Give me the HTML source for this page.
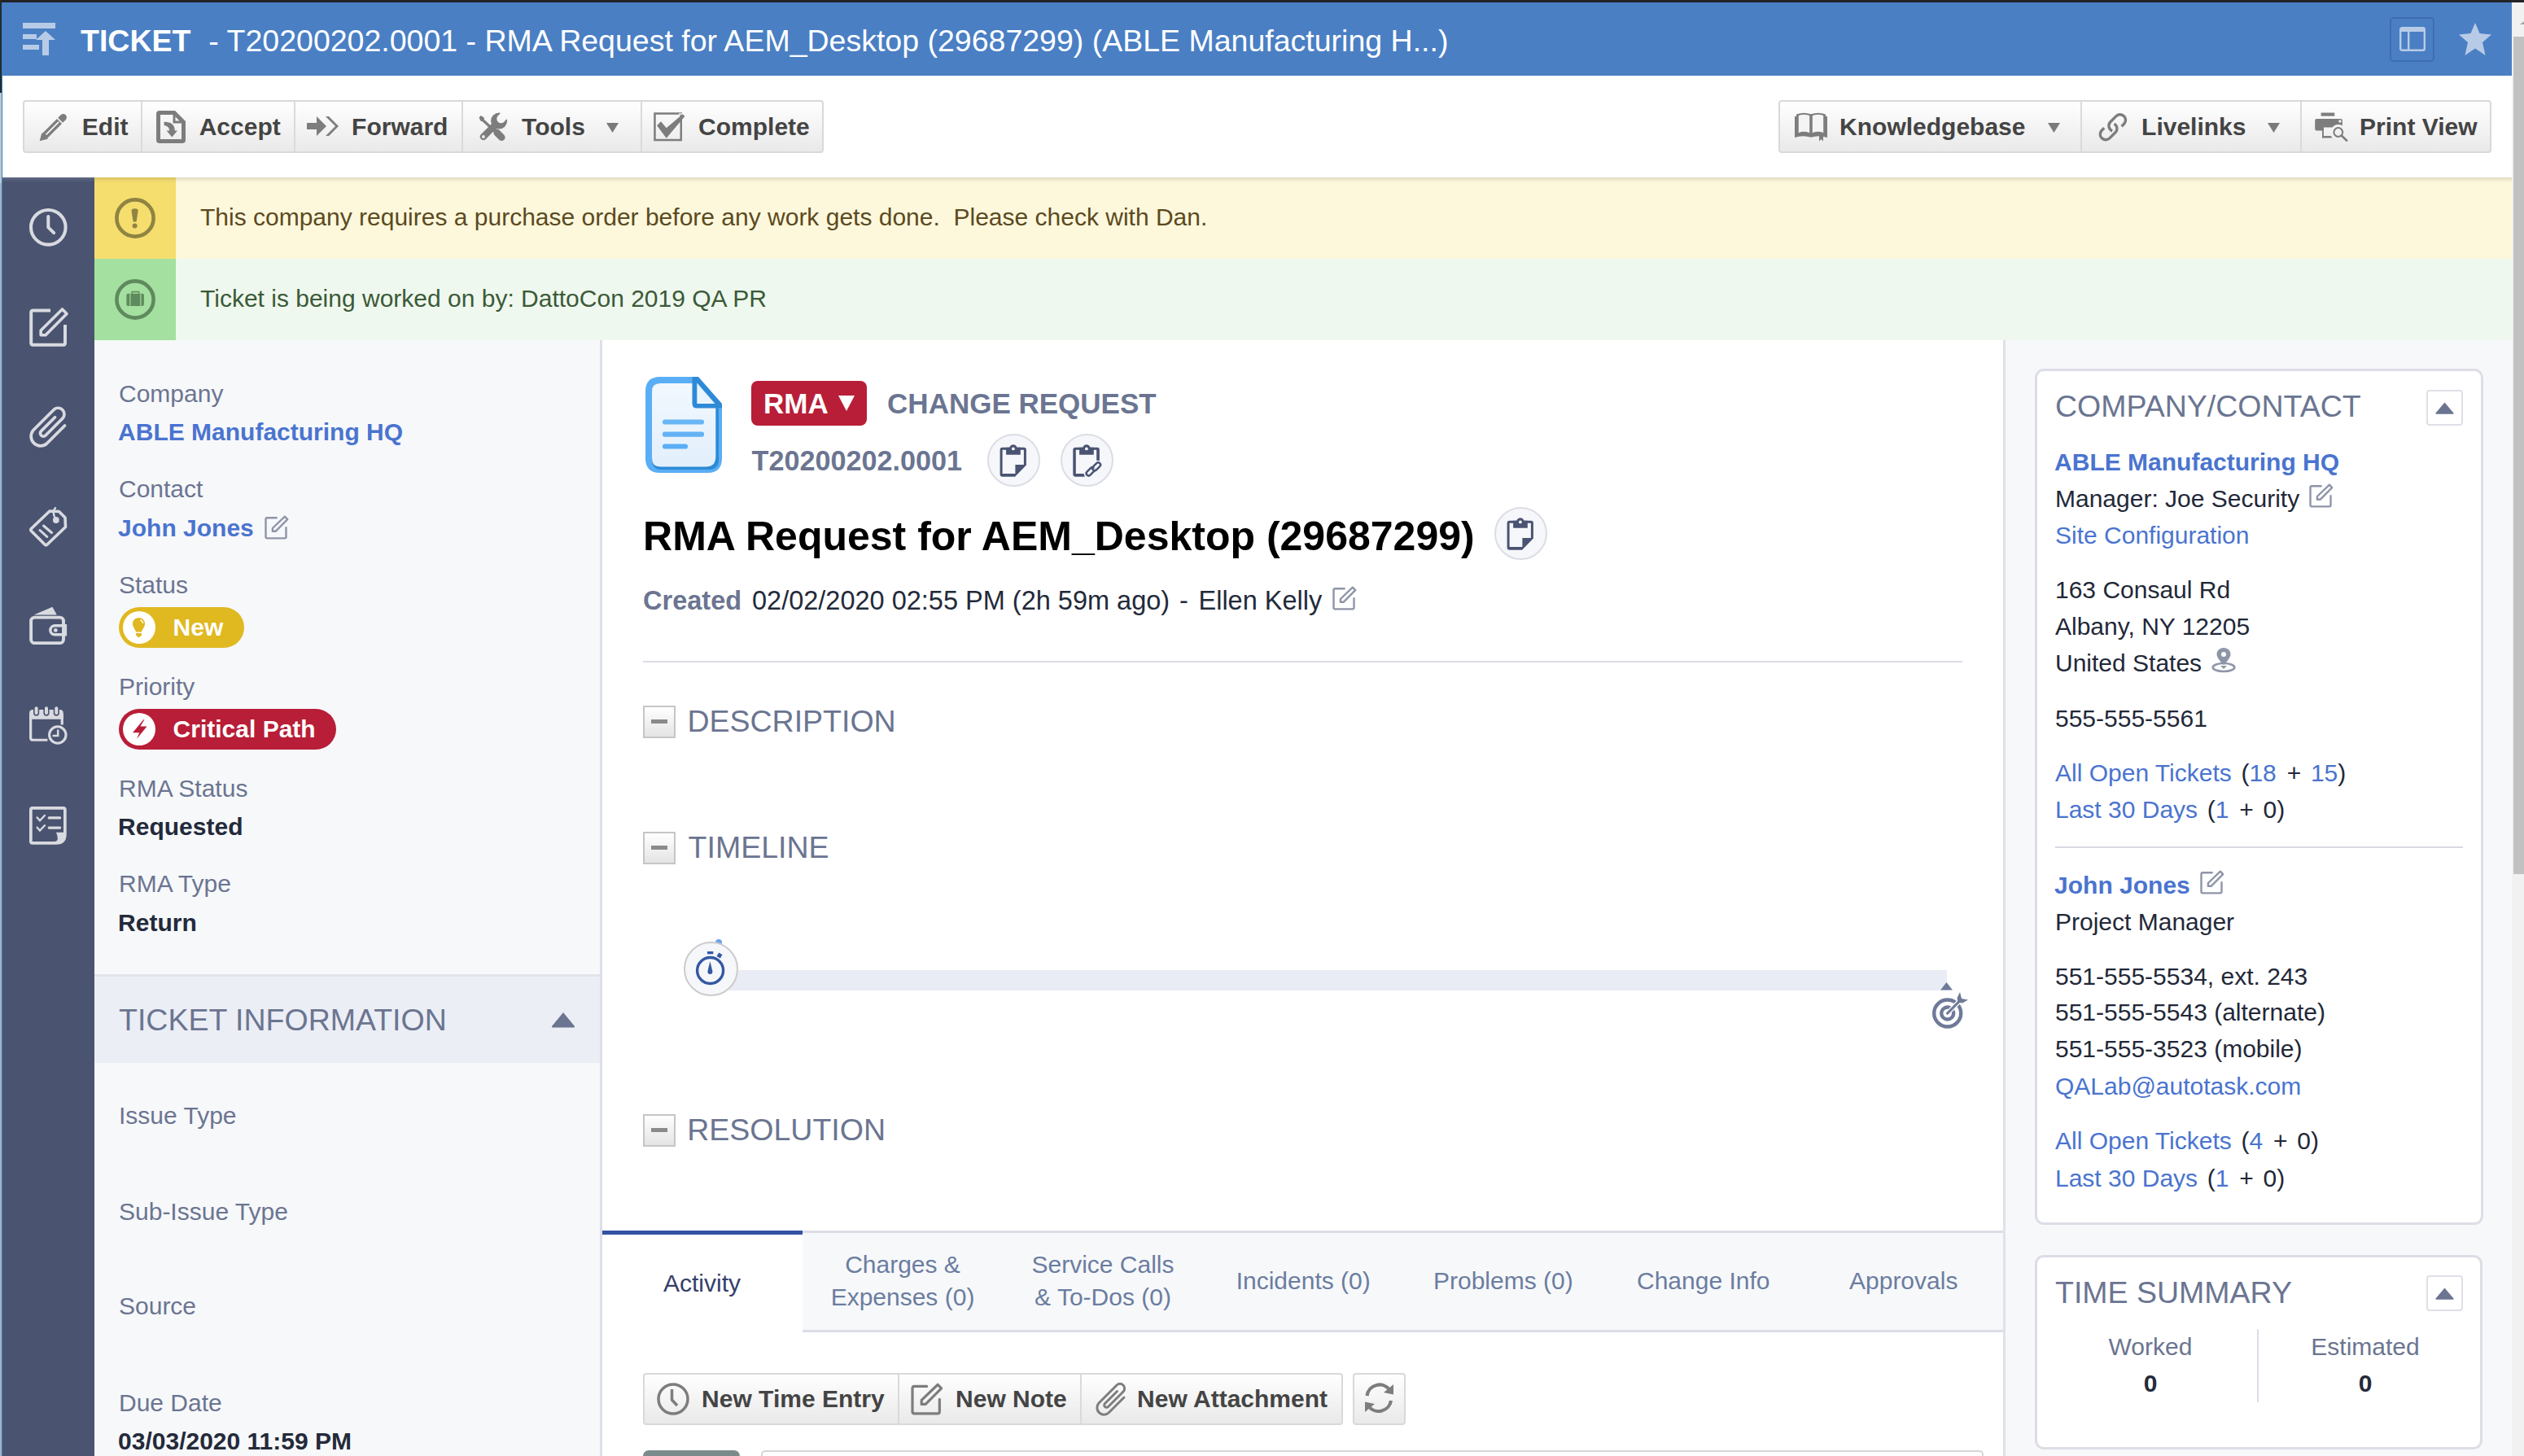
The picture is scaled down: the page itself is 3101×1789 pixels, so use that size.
<!DOCTYPE html>
<html><head><meta charset="utf-8"><style>
html,body{margin:0;padding:0;width:3101px;height:1789px;overflow:hidden;background:#fff;font-family:"Liberation Sans", sans-serif;}
</style></head><body>
<div style="position:absolute;left:0px;top:0px;width:3101px;height:3px;background:#222327"></div><div style="position:absolute;left:0px;top:0px;width:2px;height:1789px;background:#2a2a2a"></div><div style="position:absolute;left:0px;top:114px;width:2px;height:111px;background:#c6c6c6"></div><div style="position:absolute;left:0px;top:225px;width:2px;height:1564px;background:#aeb0b2"></div><div style="position:absolute;left:2px;top:3px;width:1px;height:1786px;background:#1f86de"></div><div style="position:absolute;left:3px;top:3px;width:3083px;height:90px;background:#4a7fc4"></div><svg style="position:absolute;left:28px;top:28px;overflow:visible" width="40" height="40" viewBox="0 0 40 40"><g fill="#b8cbe6"><rect x="0" y="0" width="40" height="7"/><rect x="0" y="14" width="17" height="6"/><rect x="0" y="27" width="20" height="6"/><polygon points="28,10 40,21 32,21 32,40 24,40 24,21 16,21"/></g></svg><div style="position:absolute;left:99.0px;top:32.26px;font-size:37.5px;line-height:37.5px;font-weight:700;color:#fff;white-space:pre;">TICKET</div><div style="position:absolute;left:235.5px;top:32.26px;font-size:37.5px;line-height:37.5px;font-weight:400;color:#fff;white-space:pre;">  - T20200202.0001 - RMA Request for AEM_Desktop (29687299) (ABLE Manufacturing H...)</div><div style="position:absolute;left:2936px;top:21px;width:55px;height:55px;box-sizing:border-box;border:2px solid #3e6db0;border-radius:5px"></div><svg style="position:absolute;left:2948px;top:33px;overflow:visible" width="32" height="30" viewBox="0 0 32 30"><rect x="1.2" y="1.2" width="29.6" height="27.6" rx="2" fill="none" stroke="#b8cbe6" stroke-width="2.4"/><rect x="1" y="1" width="30" height="5" fill="#b8cbe6"/><rect x="10" y="2" width="2.4" height="26" fill="#b8cbe6"/></svg><svg style="position:absolute;left:3021px;top:28px;overflow:visible" width="40" height="40" viewBox="0 0 40 40"><polygon fill="#b8cbe6" points="20,0 25.5,13 40,14.5 29,24 32.5,40 20,31.5 7.5,40 11,24 0,14.5 14.5,13"/></svg><div style="position:absolute;left:3086px;top:3px;width:15px;height:1786px;background:#f1f1f1"></div><div style="position:absolute;left:3088px;top:45px;width:13px;height:1029px;background:#c1c1c1"></div><svg style="position:absolute;left:3096px;top:24px;overflow:visible" width="8" height="6" viewBox="0 0 8 6"><polygon points="0,6 8,0 8,6" fill="#a3a3a3"/></svg><div style="position:absolute;left:3px;top:93px;width:3083px;height:125px;background:#fff"></div><div style="position:absolute;left:28px;top:123px;width:984px;height:65px;box-sizing:border-box;border:2px solid #d9d9d9;border-radius:4px;background:linear-gradient(#ffffff,#e9e9e9)"></div><div style="position:absolute;left:173px;top:125px;width:2px;height:61px;background:#dadada"></div><div style="position:absolute;left:361px;top:125px;width:2px;height:61px;background:#dadada"></div><div style="position:absolute;left:567px;top:125px;width:2px;height:61px;background:#dadada"></div><div style="position:absolute;left:787px;top:125px;width:2px;height:61px;background:#dadada"></div><div style="position:absolute;left:2185px;top:123px;width:876px;height:65px;box-sizing:border-box;border:2px solid #d9d9d9;border-radius:4px;background:linear-gradient(#ffffff,#e9e9e9)"></div><div style="position:absolute;left:2556px;top:125px;width:2px;height:61px;background:#dadada"></div><div style="position:absolute;left:2826px;top:125px;width:2px;height:61px;background:#dadada"></div><div style="position:absolute;left:100.8px;top:140.60px;font-size:30px;line-height:30px;font-weight:700;color:#444;white-space:pre;">Edit</div><div style="position:absolute;left:244.7px;top:140.60px;font-size:30px;line-height:30px;font-weight:700;color:#444;white-space:pre;">Accept</div><div style="position:absolute;left:432.1px;top:140.60px;font-size:30px;line-height:30px;font-weight:700;color:#444;white-space:pre;">Forward</div><div style="position:absolute;left:641.1px;top:140.60px;font-size:30px;line-height:30px;font-weight:700;color:#444;white-space:pre;">Tools</div><div style="position:absolute;left:858.1px;top:140.60px;font-size:30px;line-height:30px;font-weight:700;color:#444;white-space:pre;">Complete</div><div style="position:absolute;left:2260.1px;top:140.60px;font-size:30px;line-height:30px;font-weight:700;color:#444;white-space:pre;">Knowledgebase</div><div style="position:absolute;left:2631.1px;top:140.60px;font-size:30px;line-height:30px;font-weight:700;color:#444;white-space:pre;">Livelinks</div><div style="position:absolute;left:2899.1px;top:140.60px;font-size:30px;line-height:30px;font-weight:700;color:#444;white-space:pre;">Print View</div><svg style="position:absolute;left:745px;top:151px;overflow:visible" width="15" height="12" viewBox="0 0 15 12"><polygon points="0,0 15,0 7.5,12" fill="#7a7a7a"/></svg><svg style="position:absolute;left:2515.5px;top:151px;overflow:visible" width="15" height="12" viewBox="0 0 15 12"><polygon points="0,0 15,0 7.5,12" fill="#7a7a7a"/></svg><svg style="position:absolute;left:2786px;top:151px;overflow:visible" width="15" height="12" viewBox="0 0 15 12"><polygon points="0,0 15,0 7.5,12" fill="#7a7a7a"/></svg><svg style="position:absolute;left:48px;top:138px;overflow:visible" width="36" height="37" viewBox="0 0 36 37"><g fill="#7d7d7d"><path d="M0.7 35.2 L3.2 25.7 L4.5 25.4 L22 7.9 L28 13.9 L10.5 31.4 L10.6 32.8 Z"/><path d="M23.13 6.77 L26.67 3.23 A4.24 4.24 0 0 1 32.67 9.23 L29.13 12.77 Z"/></g><path d="M8.6 27.3 L24.1 11.8" stroke="#f4f4f4" stroke-width="1.8"/></svg><svg style="position:absolute;left:192px;top:136px;overflow:visible" width="36" height="40" viewBox="0 0 36 40"><g fill="none" stroke="#7d7d7d" stroke-width="5"><path d="M2.5 4 Q2.5 2.5 4 2.5 L22 2.5 L33.5 14 L33.5 36 Q33.5 37.5 32 37.5 L4 37.5 Q2.5 37.5 2.5 36 Z"/></g><path d="M22 2.5 L22 14 L33.5 14" fill="none" stroke="#7d7d7d" stroke-width="3"/><path d="M9.6 13.8 Q22.5 13.5 22.8 24.5 L26 24.5 L19.3 32.5 L12.6 24.5 L16.2 24.5 Q15.8 18.8 9.6 17.9 Z" fill="#7d7d7d"/></svg><svg style="position:absolute;left:377px;top:142px;overflow:visible" width="40" height="26" viewBox="0 0 40 26"><g fill="#7d7d7d"><path d="M0 9 L12 9 L12 1 L24 13 L12 25 L12 17 L0 17 Z"/><path d="M23 1 L27 1 L39 13 L27 25 L23 25 L35 13 Z"/></g></svg><svg style="position:absolute;left:588px;top:138px;overflow:visible" width="38" height="38" viewBox="0 0 38 38"><defs><mask id="wm"><rect x="-5" y="-5" width="50" height="50" fill="#fff"/><circle cx="27.6" cy="7.9" r="5.3" fill="#000"/><path d="M24.3 4.2 L31.3 11.2 L42 2 L33 -7 Z" fill="#000"/></mask></defs><g fill="#7d7d7d"><circle cx="25.1" cy="10.6" r="10" mask="url(#wm)"/><path d="M0.6 6.5 L2.6 3.9 L6.5 6.2 L6.9 8.5 L3.9 11.2 L2.2 10.2 Z"/><path d="M16 21.8 L18.8 19 L25.5 22 L21 27 Z"/></g><path d="M5.9 30 L19.5 16.4" stroke="#7d7d7d" stroke-width="8.2" stroke-linecap="round"/><path d="M4.6 9 L17.5 21" stroke="#7d7d7d" stroke-width="3.2"/><path d="M22.8 25.3 L28.3 30.8" stroke="#7d7d7d" stroke-width="8.6" stroke-linecap="round"/><circle cx="5.9" cy="30" r="1.9" fill="#efefef"/></svg><svg style="position:absolute;left:803px;top:137px;overflow:visible" width="40" height="38" viewBox="0 0 40 38"><rect x="1.45" y="2.5" width="32.3" height="32.55" fill="none" stroke="#7d7d7d" stroke-width="2.5"/><path d="M31 3 L37 3.3 L33 8" fill="none" stroke="#f6f6f6" stroke-width="1.6"/><path d="M4.1 17.2 L9 12.3 L15.7 20.3 L35.8 3.3 L38.3 5.9 L15.7 32.7 Z" fill="#7d7d7d"/></svg><svg style="position:absolute;left:2205px;top:137px;overflow:visible" width="40" height="38" viewBox="0 0 40 38"><g fill="#7d7d7d"><path d="M0 6 L2 6 L2 3.5 Q11 0 20 3.3 Q29 0 38 3.5 L38 6 L40 6 L40 32 Q30 28.5 20 31.8 Q10 28.5 0 32 Z"/><path d="M30 29 L35 29 L35 36.6 L32.5 33.9 L30 36.6 Z"/></g><path d="M4.8 4.9 Q11 2.8 18.2 5 L18.2 26.2 Q11 23.5 4.8 26.2 Z M21.8 5 Q29 2.8 35.2 4.9 L35.2 26.2 Q29 23.5 21.8 26.2 Z" fill="#f4f4f4"/></svg><svg style="position:absolute;left:2578px;top:137px;overflow:visible" width="38" height="38" viewBox="0 0 38 38"><g fill="none" stroke="#7d7d7d" stroke-width="3.4"><path d="M28.6 18.2 L31.8 15 A6.8 6.8 0 0 0 22.2 5.4 L14.9 12.7 A6.8 6.8 0 0 0 17.2 23.8"/><path d="M19.5 15.1 A6.8 6.8 0 0 1 20.9 25.8 L13.6 33.1 A6.8 6.8 0 0 1 4 23.5 L7.2 20.3"/></g></svg><svg style="position:absolute;left:2844px;top:138px;overflow:visible" width="42" height="37" viewBox="0 0 42 37"><g fill="#7d7d7d"><rect x="7.6" y="0.5" width="16.6" height="4.1"/><path d="M2.2 7.9 L31.9 7.9 Q33.9 7.9 33.9 9.9 L33.9 16.5 A9.5 9.5 0 0 0 21.7 18.2 L21.7 18.5 L10.8 18.5 L10.8 22.6 L2.2 22.6 Q0.2 22.6 0.2 20.6 L0.2 9.9 Q0.2 7.9 2.2 7.9 Z"/><rect x="9" y="18.5" width="1.9" height="13"/><path d="M9 29.1 L20 29.1 L21.2 31.5 L9 31.5 Z"/></g><circle cx="30.9" cy="11" r="1.7" fill="#f4f4f4"/><circle cx="28.8" cy="24.5" r="5.4" fill="none" stroke="#7d7d7d" stroke-width="2"/><path d="M33 28.8 L39.2 34.7" stroke="#7d7d7d" stroke-width="2.6" stroke-linecap="round"/></svg><div style="position:absolute;left:3px;top:218px;width:113px;height:1571px;background:#4a5470"></div><div style="position:absolute;left:3px;top:218px;width:113px;height:6px;background:linear-gradient(#5f6883,#4a5470)"></div><svg style="position:absolute;left:36px;top:256px;overflow:visible" width="46" height="48" viewBox="0 0 46 48"><circle cx="23.3" cy="23.3" r="21.3" fill="none" stroke="#d9dae0" stroke-width="4.1"/><path d="M23.3 10 L23.3 23.3 L30.2 30.2" fill="none" stroke="#d9dae0" stroke-width="4" stroke-linecap="round" stroke-linejoin="round"/></svg><svg style="position:absolute;left:36px;top:378.5px;overflow:visible" width="46" height="48" viewBox="0 0 46 48"><path d="M26 2.5 L4.5 2.5 Q2.2 2.5 2.2 4.8 L2.2 42.2 Q2.2 44.8 4.8 44.8 L41.5 44.8 Q44 44.8 44 42.2 L44 20" fill="none" stroke="#d9dae0" stroke-width="4"/><path d="M14.2 27 L40.5 1 L46 6.5 L20 32.8 L14.2 32.8 Z" fill="none" stroke="#d9dae0" stroke-width="3.6" stroke-linejoin="round"/></svg><svg style="position:absolute;left:36px;top:501px;overflow:visible" width="46" height="48" viewBox="0 0 46 48"><path d="M43.5 22 L21.5 44 A11.7 11.7 0 0 1 5 27.5 L30.5 2 A7.6 7.6 0 0 1 41.2 12.7 L20 34 A3.8 3.8 0 0 1 14.6 28.6 L31.5 11.7" fill="none" stroke="#d9dae0" stroke-width="3.7" stroke-linecap="round"/></svg><svg style="position:absolute;left:36px;top:623px;overflow:visible" width="46" height="48" viewBox="0 0 46 48"><path d="M19 46 L2.5 29.5 Q1 28 2.5 26.5 L25 5 L36.5 5.5 L44 13 L44.5 24.5 L22 46 Q20.5 47.5 19 46 Z" fill="none" stroke="#d9dae0" stroke-width="3.6" stroke-linejoin="round"/><circle cx="32.8" cy="16" r="3.9" fill="#d9dae0"/><path d="M32 1.2 Q27 6 32.8 16" fill="none" stroke="#d9dae0" stroke-width="2.4" stroke-linecap="round"/><path d="M13 28.5 L21.8 36.5 M17.5 23 L27.5 31.5" stroke="#d9dae0" stroke-width="3" stroke-linecap="round"/></svg><svg style="position:absolute;left:36px;top:746px;overflow:visible" width="46" height="48" viewBox="0 0 46 48"><rect x="2.1" y="12.65" width="39.9" height="31.5" rx="4.5" fill="none" stroke="#d9dae0" stroke-width="3.9"/><path d="M5.5 9.4 L28.4 -0.2 L33.8 9.4 Z" fill="#d9dae0"/><path d="M44.35 22.75 L31.4 22.75 A5.55 5.55 0 0 0 31.4 33.85 L44.35 33.85 Z" fill="none" stroke="#d9dae0" stroke-width="3.5"/><circle cx="32.3" cy="28.4" r="2.4" fill="#d9dae0"/></svg><svg style="position:absolute;left:36px;top:868px;overflow:visible" width="46" height="48" viewBox="0 0 46 48"><path d="M22.4 41.25 L4.5 41.25 Q1.65 41.25 1.65 38.4 L1.65 9 M40.25 9 L40.25 22.4" fill="none" stroke="#d9dae0" stroke-width="3.2"/><path d="M0.05 15.8 L0.05 8.5 Q0.05 4.1 4.4 4.1 L37.4 4.1 Q41.8 4.1 41.8 8.5 L41.8 15.8 Z" fill="#d9dae0"/><g fill="#d9dae0" stroke="#4a5470" stroke-width="1.6"><rect x="5.8" y="-0.6" width="5.6" height="11.5" rx="2.8"/><rect x="18.2" y="-0.6" width="5.6" height="11.5" rx="2.8"/><rect x="30.5" y="-0.6" width="5.6" height="11.5" rx="2.8"/></g><circle cx="34.8" cy="35" r="11" fill="#4a5470"/><circle cx="34.8" cy="35" r="10.2" fill="none" stroke="#d9dae0" stroke-width="3.1"/><path d="M35.2 28.6 L35.2 36 L28.6 36" fill="none" stroke="#d9dae0" stroke-width="2.5"/></svg><svg style="position:absolute;left:36px;top:991px;overflow:visible" width="46" height="48" viewBox="0 0 46 48"><path d="M4 0 L41.7 0 Q45.7 0 45.7 4 L45.7 34 Q45.7 46.7 33 46.7 L4 46.7 Q0 46.7 0 42.7 L0 4 Q0 0 4 0 Z M3.7 3.7 L42 3.7 L42 31.7 L33 31.7 Q35.5 38 34.5 41 Q33.5 43 31.5 43 L3.7 43 Z" fill="#d9dae0" fill-rule="evenodd"/><path d="M9 12.7 L13 17.3 L19.6 10.2 M9 25 L13 29.6 L19.6 22.5" fill="none" stroke="#d9dae0" stroke-width="2.3"/><path d="M24.3 13.9 L37.6 13.9 M24.3 26.1 L37.6 26.1" stroke="#d9dae0" stroke-width="3.4" stroke-linecap="round"/></svg><div style="position:absolute;left:116px;top:218px;width:100px;height:100px;background:#f5de6e"></div><div style="position:absolute;left:216px;top:218px;width:2870px;height:100px;background:#fdf8dc"></div><div style="position:absolute;left:116px;top:318px;width:100px;height:100px;background:#a4e0a0"></div><div style="position:absolute;left:216px;top:318px;width:2870px;height:100px;background:#eff8ee"></div><div style="position:absolute;left:116px;top:218px;width:2970px;height:7px;background:linear-gradient(rgba(0,0,0,0.12),rgba(0,0,0,0.03) 60%,rgba(0,0,0,0))"></div><svg style="position:absolute;left:141px;top:243px;overflow:visible" width="50" height="50" viewBox="0 0 50 50"><circle cx="25" cy="25" r="22.6" fill="none" stroke="#8f8442" stroke-width="4.6"/><path d="M20.5 15.8 Q20.5 13.3 24.6 13.3 Q28.7 13.3 28.7 15.8 L26.6 29.4 L22.6 29.4 Z" fill="#8f8442"/><circle cx="24.6" cy="34.6" r="3" fill="#8f8442"/></svg><svg style="position:absolute;left:141px;top:343px;overflow:visible" width="50" height="50" viewBox="0 0 50 50"><circle cx="25" cy="25" r="22.6" fill="none" stroke="#5f8a5d" stroke-width="4.6"/><rect x="14.4" y="17.7" width="21.5" height="15.2" rx="1.8" fill="#5f8a5d"/><path d="M21.2 17.7 L21.2 15.5 L29.6 15.5 L29.6 17.7" fill="none" stroke="#5f8a5d" stroke-width="1.5"/><rect x="18.3" y="17.7" width="1.1" height="15.2" fill="#a4e0a0"/><rect x="31.3" y="17.7" width="1.1" height="15.2" fill="#a4e0a0"/></svg><div style="position:absolute;left:246px;top:252.10px;font-size:30px;line-height:30px;font-weight:400;color:#5c4a1f;white-space:pre;">This company requires a purchase order before any work gets done.  Please check with Dan.</div><div style="position:absolute;left:246px;top:352.11px;font-size:30px;line-height:30px;font-weight:400;color:#3b5a39;white-space:pre;">Ticket is being worked on by: DattoCon 2019 QA PR</div><div style="position:absolute;left:116px;top:418px;width:621px;height:1371px;background:#f7f8fa"></div><div style="position:absolute;left:737px;top:418px;width:3px;height:1371px;background:#dedfe7"></div><div style="position:absolute;left:146px;top:468.61px;font-size:30px;line-height:30px;font-weight:400;color:#6b7591;white-space:pre;">Company</div><div style="position:absolute;left:145.1px;top:515.61px;font-size:30px;line-height:30px;font-weight:700;color:#4a74cf;white-space:pre;">ABLE Manufacturing HQ</div><div style="position:absolute;left:146px;top:585.61px;font-size:30px;line-height:30px;font-weight:400;color:#6b7591;white-space:pre;">Contact</div><div style="position:absolute;left:145.1px;top:633.61px;font-size:30px;line-height:30px;font-weight:700;color:#4a74cf;white-space:pre;">John Jones</div><div style="position:absolute;left:146px;top:703.61px;font-size:30px;line-height:30px;font-weight:400;color:#6b7591;white-space:pre;">Status</div><div style="position:absolute;left:146px;top:746px;width:154px;height:50px;background:#e0b820;border-radius:25px"></div><div style="position:absolute;left:151px;top:751px;width:40px;height:40px;border-radius:50%;background:#fff"></div><svg style="position:absolute;left:158px;top:757px;overflow:visible" width="26" height="30" viewBox="0 0 26 30"><path d="M12.5 2 C7.5 2 5 5.5 5 9.5 C5 13.5 8 15.5 9 19.5 L16 19.5 C17 15.5 20 13.5 20 9.5 C20 5.5 17.5 2 12.5 2 Z" fill="#e0b820"/><path d="M9 21 L16 21 L16 23.5 L12.5 26.5 L9 23.5 Z" fill="#e0b820"/><path d="M14.5 5 Q17.5 6 17.8 9" stroke="#fff" stroke-width="1.4" fill="none"/></svg><div style="position:absolute;left:212.6px;top:755.61px;font-size:30px;line-height:30px;font-weight:700;color:#fff;white-space:pre;">New</div><div style="position:absolute;left:146px;top:828.61px;font-size:30px;line-height:30px;font-weight:400;color:#6b7591;white-space:pre;">Priority</div><div style="position:absolute;left:146px;top:871px;width:267px;height:50px;background:#b81e37;border-radius:25px"></div><div style="position:absolute;left:151px;top:876px;width:40px;height:40px;border-radius:50%;background:#fff"></div><svg style="position:absolute;left:158px;top:883px;overflow:visible" width="26" height="26" viewBox="0 0 26 26"><path d="M18.5 1 L5 17.2 L13.3 17.2 L10 25 L22.5 9.6 L14.5 9.6 L19.5 1 Z" fill="#b81e37"/></svg><div style="position:absolute;left:212.6px;top:880.61px;font-size:30px;line-height:30px;font-weight:700;color:#fff;white-space:pre;">Critical Path</div><div style="position:absolute;left:146px;top:954.21px;font-size:30px;line-height:30px;font-weight:400;color:#6b7591;white-space:pre;">RMA Status</div><div style="position:absolute;left:145.1px;top:1000.61px;font-size:30px;line-height:30px;font-weight:700;color:#232a3a;white-space:pre;">Requested</div><div style="position:absolute;left:146px;top:1070.61px;font-size:30px;line-height:30px;font-weight:400;color:#6b7591;white-space:pre;">RMA Type</div><div style="position:absolute;left:145.1px;top:1118.61px;font-size:30px;line-height:30px;font-weight:700;color:#232a3a;white-space:pre;">Return</div><div style="position:absolute;left:116px;top:1197px;width:621px;height:3px;background:#e2e4ea"></div><div style="position:absolute;left:116px;top:1200px;width:621px;height:106px;background:#eceef5"></div><div style="position:absolute;left:146px;top:1234.86px;font-size:37.5px;line-height:37.5px;font-weight:400;color:#6b7591;white-space:pre;">TICKET INFORMATION</div><svg style="position:absolute;left:677px;top:1243px;overflow:visible" width="30" height="20" viewBox="0 0 30 20"><path d="M15 1 L29 18 Q29.5 19.5 28 19.5 L2 19.5 Q0.5 19.5 1 18 Z" fill="#6b7591"/></svg><div style="position:absolute;left:146px;top:1355.61px;font-size:30px;line-height:30px;font-weight:400;color:#6b7591;white-space:pre;">Issue Type</div><div style="position:absolute;left:146px;top:1474.01px;font-size:30px;line-height:30px;font-weight:400;color:#6b7591;white-space:pre;">Sub-Issue Type</div><div style="position:absolute;left:146px;top:1590.40px;font-size:30px;line-height:30px;font-weight:400;color:#6b7591;white-space:pre;">Source</div><div style="position:absolute;left:146px;top:1708.61px;font-size:30px;line-height:30px;font-weight:400;color:#6b7591;white-space:pre;">Due Date</div><div style="position:absolute;left:145.1px;top:1755.61px;font-size:30px;line-height:30px;font-weight:700;color:#232a3a;white-space:pre;">03/03/2020 11:59 PM</div><div style="position:absolute;left:740px;top:418px;width:1721px;height:1371px;background:#fff"></div><div style="position:absolute;left:2461px;top:418px;width:3px;height:1371px;background:#e0e1e9"></div><svg style="position:absolute;left:793px;top:463px;overflow:visible" width="94" height="118" viewBox="0 0 94 118"><defs><linearGradient id="dg" x1="0" y1="0" x2="0" y2="1"><stop offset="0" stop-color="#f2f8fe"/><stop offset="1" stop-color="#e2effc"/></linearGradient></defs><path d="M18 0 L60 0 L94 37 L94 100 Q94 118 76 118 L18 118 Q0 118 0 100 L0 18 Q0 0 18 0 Z" fill="#5aaef5"/><path d="M20 8 L60 8 L90 40 L90 102 Q90 114 78 114 L20 114 Q8 114 8 102 L8 20 Q8 8 20 8 Z" fill="#2e8ad6"/><path d="M18 8 L60 8 L86.3 38 L86.3 98 Q86.3 110.5 74 110.5 L18 110.5 Q8 110.5 8 100 L8 18 Q8 8 18 8 Z" fill="url(#dg)"/><path d="M57.5 0 L65 0 L94 33 L94 38.5 L63 38.5 Q57.5 38.5 57.5 33 Z" fill="#2e8ad6"/><path d="M63.3 7.5 L63.3 33 L85.5 33 Z" fill="#eaf4fd"/><g stroke-linecap="round" stroke-width="6.2"><path d="M24 55.5 L69 55.5" stroke="#69b6f5"/><path d="M24 70.7 L69 70.7" stroke="#63b2f5"/><path d="M24 85.5 L49 85.5" stroke="#5aaef5"/></g></svg><div style="position:absolute;left:923px;top:468px;width:142px;height:55px;background:#b81e37;border-radius:8px"></div><div style="position:absolute;left:938.1px;top:478.37px;font-size:35px;line-height:35px;font-weight:700;color:#fff;white-space:pre;">RMA</div><svg style="position:absolute;left:1030px;top:486px;overflow:visible" width="20" height="19" viewBox="0 0 20 19"><polygon points="0,0 20,0 10,19" fill="#fff"/></svg><div style="position:absolute;left:1090.1px;top:478.37px;font-size:35px;line-height:35px;font-weight:700;color:#6b7591;white-space:pre;">CHANGE REQUEST</div><div style="position:absolute;left:923.5px;top:549.05px;font-size:34.2px;line-height:34.2px;font-weight:700;color:#6b7591;white-space:pre;">T20200202.0001</div><div style="position:absolute;left:1213px;top:533px;width:65px;height:65px;box-sizing:border-box;border:2.5px solid #dcdde5;border-radius:50%;background:#f6f7fa"></div><svg style="position:absolute;left:1228px;top:546px;overflow:visible" width="36" height="41" viewBox="0 0 36 41"><path d="M3.6 3.8 Q0.6 3.8 0.6 6.8 L0.6 36.8 Q0.6 39.8 3.6 39.8 L19 39.8 L32.9 25.5 L32.9 6.8 Q32.9 3.8 29.9 3.8 Z M3.6 6.7 L29.9 6.7 L29.9 25 L19.4 25 L19.4 36 L3.6 36 Z" fill="#4a5472" fill-rule="evenodd"/><path d="M8.1 3.8 L12.3 3.8 Q13.5 0.2 16.9 0.2 Q20.3 0.2 21.5 3.8 L25.8 3.8 L25.8 12.75 L8.1 12.75 Z" fill="#4a5472"/><circle cx="16.9" cy="5.4" r="1.9" fill="#f6f7fa"/></svg><div style="position:absolute;left:1303px;top:533px;width:65px;height:65px;box-sizing:border-box;border:2.5px solid #dcdde5;border-radius:50%;background:#f6f7fa"></div><svg style="position:absolute;left:1318px;top:546px;overflow:visible" width="36" height="41" viewBox="0 0 36 41"><path d="M3.6 3.8 Q0.3 3.8 0.3 6.8 L0.3 36.8 Q0.3 39.8 3.6 39.8 L15 39.8 L13.5 36 L3.8 36 L3.8 6.7 L29.2 6.7 L29.2 19.7 L32.9 20.2 L32.9 6.8 Q32.9 3.8 29.9 3.8 Z" fill="#4a5472"/><path d="M8.1 3.8 L12.3 3.8 Q13.5 0.2 16.9 0.2 Q20.3 0.2 21.5 3.8 L25.8 3.8 L25.8 12.75 L8.1 12.75 Z" fill="#4a5472"/><circle cx="16.9" cy="5.4" r="1.9" fill="#f6f7fa"/><rect x="15.8" y="30.7" width="11.6" height="5.6" rx="2.8" transform="rotate(-45 21.6 33.5)" fill="none" stroke="#f6f7fa" stroke-width="5.5"/><rect x="23.3" y="24.5" width="11.6" height="5.6" rx="2.8" transform="rotate(-45 29.1 27.3)" fill="none" stroke="#f6f7fa" stroke-width="5.5"/><rect x="15.8" y="30.7" width="11.6" height="5.6" rx="2.8" transform="rotate(-45 21.6 33.5)" fill="none" stroke="#4a5472" stroke-width="2.5"/><path d="M25.5 29.5 L27.5 31.5" stroke="#f6f7fa" stroke-width="1.6"/><rect x="23.3" y="24.5" width="11.6" height="5.6" rx="2.8" transform="rotate(-45 29.1 27.3)" fill="none" stroke="#4a5472" stroke-width="2.5"/></svg><div style="position:absolute;left:790.1px;top:634.17px;font-size:50px;line-height:50px;font-weight:700;color:#000;white-space:pre;">RMA Request for AEM_Desktop (29687299)</div><div style="position:absolute;left:1836px;top:623px;width:65px;height:65px;box-sizing:border-box;border:2.5px solid #dcdde5;border-radius:50%;background:#f6f7fa"></div><svg style="position:absolute;left:1851px;top:636px;overflow:visible" width="36" height="41" viewBox="0 0 36 41"><path d="M3.6 3.8 Q0.6 3.8 0.6 6.8 L0.6 36.8 Q0.6 39.8 3.6 39.8 L19 39.8 L32.9 25.5 L32.9 6.8 Q32.9 3.8 29.9 3.8 Z M3.6 6.7 L29.9 6.7 L29.9 25 L19.4 25 L19.4 36 L3.6 36 Z" fill="#4a5472" fill-rule="evenodd"/><path d="M8.1 3.8 L12.3 3.8 Q13.5 0.2 16.9 0.2 Q20.3 0.2 21.5 3.8 L25.8 3.8 L25.8 12.75 L8.1 12.75 Z" fill="#4a5472"/><circle cx="16.9" cy="5.4" r="1.9" fill="#f6f7fa"/></svg><div style="position:absolute;left:790.1px;top:722.49px;font-size:32.5px;line-height:32.5px;font-weight:700;color:#6b7591;white-space:pre;">Created</div><div style="position:absolute;left:924px;top:722.49px;font-size:32.5px;line-height:32.5px;font-weight:400;color:#232a3a;white-space:pre;">02/02/2020 02:55 PM (2h 59m ago)</div><div style="position:absolute;left:1449px;top:722.49px;font-size:32.5px;line-height:32.5px;font-weight:400;color:#232a3a;white-space:pre;">-</div><div style="position:absolute;left:1472.5px;top:722.49px;font-size:32.5px;line-height:32.5px;font-weight:400;color:#232a3a;white-space:pre;">Ellen Kelly</div><svg style="position:absolute;left:1637px;top:720px;overflow:visible" width="30" height="30" viewBox="0 0 30 30"><g transform="scale(1.0)"><path d="M14.7 3.3 L3.3 3.3 Q1.5 3.3 1.5 5.1 L1.5 26.6 Q1.5 28.4 3.3 28.4 L24.7 28.4 Q26.5 28.4 26.5 26.6 L26.5 15.3" fill="none" stroke="#8e95a8" stroke-width="2.4" stroke-linecap="round"/><path d="M9.9 19.8 L9.9 16 L24.9 1.7 L28.2 5.1 L13.6 19.8 Z" fill="none" stroke="#8e95a8" stroke-width="2.4" stroke-linejoin="round"/></g></svg><svg style="position:absolute;left:325px;top:633px;overflow:visible" width="30" height="30" viewBox="0 0 30 30"><g transform="scale(1.0)"><path d="M14.7 3.3 L3.3 3.3 Q1.5 3.3 1.5 5.1 L1.5 26.6 Q1.5 28.4 3.3 28.4 L24.7 28.4 Q26.5 28.4 26.5 26.6 L26.5 15.3" fill="none" stroke="#8e95a8" stroke-width="2.4" stroke-linecap="round"/><path d="M9.9 19.8 L9.9 16 L24.9 1.7 L28.2 5.1 L13.6 19.8 Z" fill="none" stroke="#8e95a8" stroke-width="2.4" stroke-linejoin="round"/></g></svg><div style="position:absolute;left:790px;top:812px;width:1621px;height:2px;background:#dcdde6"></div><div style="position:absolute;left:790px;top:867px;width:40px;height:40px;box-sizing:border-box;border:2px solid #c6c6c6;background:linear-gradient(#ffffff,#e4e4e4)"></div><div style="position:absolute;left:800px;top:884px;width:20px;height:5px;background:#8a8a8a"></div><div style="position:absolute;left:844.4px;top:868.26px;font-size:37.5px;line-height:37.5px;font-weight:400;color:#6b7591;white-space:pre;">DESCRIPTION</div><div style="position:absolute;left:790px;top:1022px;width:40px;height:40px;box-sizing:border-box;border:2px solid #c6c6c6;background:linear-gradient(#ffffff,#e4e4e4)"></div><div style="position:absolute;left:800px;top:1039px;width:20px;height:5px;background:#8a8a8a"></div><div style="position:absolute;left:845.6px;top:1022.96px;font-size:37.5px;line-height:37.5px;font-weight:400;color:#6b7591;white-space:pre;">TIMELINE</div><div style="position:absolute;left:790px;top:1369px;width:40px;height:40px;box-sizing:border-box;border:2px solid #c6c6c6;background:linear-gradient(#ffffff,#e4e4e4)"></div><div style="position:absolute;left:800px;top:1386px;width:20px;height:5px;background:#8a8a8a"></div><div style="position:absolute;left:844.2px;top:1370.26px;font-size:37.5px;line-height:37.5px;font-weight:400;color:#6b7591;white-space:pre;">RESOLUTION</div><div style="position:absolute;left:880px;top:1192px;width:1512px;height:25px;background:#e9ecf4"></div><div style="position:absolute;left:879px;top:1154px;width:8px;height:8px;border-radius:50%;background:#6fa3ea"></div><div style="position:absolute;left:840px;top:1157px;width:66.5px;height:66.5px;box-sizing:border-box;border:2.6px solid #cccccc;border-radius:50%;background:#f6f7fa"></div><svg style="position:absolute;left:853px;top:1168px;overflow:visible" width="40" height="45" viewBox="0 0 40 45"><circle cx="19.6" cy="24.5" r="16" fill="none" stroke="#3358a5" stroke-width="3.4"/><rect x="16" y="1" width="7.3" height="3.3" fill="#3358a5"/><rect x="28.5" y="3.5" width="5" height="5" fill="#3358a5" transform="rotate(30 31 6)"/><path d="M19.4 13 L22.3 25 Q22.8 29 19.4 29 Q16 29 16.5 25 Z" fill="#3358a5"/></svg><svg style="position:absolute;left:2384px;top:1207px;overflow:visible" width="15" height="10" viewBox="0 0 15 10"><polygon points="7.5,0 15,9.5 0,9.5" fill="#6f7a98"/></svg><svg style="position:absolute;left:2373px;top:1218px;overflow:visible" width="46" height="46" viewBox="0 0 46 46"><circle cx="19.7" cy="27" r="16.5" fill="none" stroke="#6f7a98" stroke-width="4.4"/><circle cx="19.7" cy="27" r="7.5" fill="none" stroke="#6f7a98" stroke-width="4.4"/><path d="M19.7 27 L36 10.5" stroke="#f6f7fa" stroke-width="6"/><path d="M19.7 27 L36 10.5" stroke="#6f7a98" stroke-width="3.2" stroke-linecap="round"/><path d="M31.5 8 L35 1 L37 9 L45 10.5 L38 14.5 L32.5 13.5 Z" fill="#6f7a98"/></svg><div style="position:absolute;left:740px;top:1512px;width:1721px;height:125px;background:#f7f8fa"></div><div style="position:absolute;left:986px;top:1512px;width:1475px;height:3px;background:#dcdde6"></div><div style="position:absolute;left:986px;top:1634px;width:1475px;height:3px;background:#dcdde6"></div><div style="position:absolute;left:740px;top:1512px;width:246px;height:125px;background:#fff"></div><div style="position:absolute;left:740px;top:1512px;width:246px;height:5px;background:#3452a3"></div><div style="position:absolute;left:815px;top:1561.61px;font-size:30px;line-height:30px;font-weight:400;color:#34406a;white-space:pre;">Activity</div><div style="position:absolute;left:609px;width:1000px;text-align:center;top:1538.81px;font-size:30px;line-height:30px;font-weight:400;color:#6b7da0;white-space:pre;">Charges &amp;</div><div style="position:absolute;left:609px;width:1000px;text-align:center;top:1579.01px;font-size:30px;line-height:30px;font-weight:400;color:#6b7da0;white-space:pre;">Expenses (0)</div><div style="position:absolute;left:855px;width:1000px;text-align:center;top:1538.81px;font-size:30px;line-height:30px;font-weight:400;color:#6b7da0;white-space:pre;">Service Calls</div><div style="position:absolute;left:855px;width:1000px;text-align:center;top:1579.01px;font-size:30px;line-height:30px;font-weight:400;color:#6b7da0;white-space:pre;">&amp; To-Dos (0)</div><div style="position:absolute;left:1518.7px;top:1558.61px;font-size:30px;line-height:30px;font-weight:400;color:#6b7da0;white-space:pre;">Incidents (0)</div><div style="position:absolute;left:1761px;top:1558.61px;font-size:30px;line-height:30px;font-weight:400;color:#6b7da0;white-space:pre;">Problems (0)</div><div style="position:absolute;left:2011px;top:1558.61px;font-size:30px;line-height:30px;font-weight:400;color:#6b7da0;white-space:pre;">Change Info</div><div style="position:absolute;left:2272px;top:1558.61px;font-size:30px;line-height:30px;font-weight:400;color:#6b7da0;white-space:pre;">Approvals</div><div style="position:absolute;left:790px;top:1687px;width:860px;height:64px;box-sizing:border-box;border:2px solid #d9d9d9;border-radius:4px;background:linear-gradient(#ffffff,#e9e9e9)"></div><div style="position:absolute;left:1103px;top:1689px;width:2px;height:60px;background:#dadada"></div><div style="position:absolute;left:1327px;top:1689px;width:2px;height:60px;background:#dadada"></div><div style="position:absolute;left:1662px;top:1687px;width:65px;height:64px;box-sizing:border-box;border:2px solid #d9d9d9;border-radius:4px;background:linear-gradient(#ffffff,#e9e9e9)"></div><div style="position:absolute;left:862.1px;top:1703.61px;font-size:30px;line-height:30px;font-weight:700;color:#444;white-space:pre;">New Time Entry</div><div style="position:absolute;left:1174.1px;top:1703.61px;font-size:30px;line-height:30px;font-weight:700;color:#444;white-space:pre;">New Note</div><div style="position:absolute;left:1397.1px;top:1703.61px;font-size:30px;line-height:30px;font-weight:700;color:#444;white-space:pre;">New Attachment</div><svg style="position:absolute;left:807px;top:1699px;overflow:visible" width="40" height="40" viewBox="0 0 40 40"><circle cx="20" cy="20" r="18" fill="none" stroke="#7d7d7d" stroke-width="3.5"/><path d="M18.5 8 L18.5 21 L25 28" fill="none" stroke="#7d7d7d" stroke-width="3.5"/></svg><svg style="position:absolute;left:1119px;top:1699px;overflow:visible" width="40" height="40" viewBox="0 0 40 40"><g transform="scale(1.3333333333333333)"><path d="M14.7 3.3 L3.3 3.3 Q1.5 3.3 1.5 5.1 L1.5 26.6 Q1.5 28.4 3.3 28.4 L24.7 28.4 Q26.5 28.4 26.5 26.6 L26.5 15.3" fill="none" stroke="#7d7d7d" stroke-width="2.4" stroke-linecap="round"/><path d="M9.9 19.8 L9.9 16 L24.9 1.7 L28.2 5.1 L13.6 19.8 Z" fill="none" stroke="#7d7d7d" stroke-width="2.4" stroke-linejoin="round"/></g></svg><svg style="position:absolute;left:1345px;top:1698px;overflow:visible" width="38" height="42" viewBox="0 0 38 42"><path d="M36 19 L17 38 A8.5 8.5 0 0 1 5 26 L27 4 A5.6 5.6 0 0 1 35 12 L16.5 30.5 A2.8 2.8 0 0 1 12.5 26.5 L27.5 11.5" fill="none" stroke="#7d7d7d" stroke-width="3" stroke-linecap="round"/></svg><svg style="position:absolute;left:1674px;top:1698px;overflow:visible" width="42" height="42" viewBox="0 0 42 42"><path d="M33.5 10 A15.5 15.5 0 0 0 5.5 17" fill="none" stroke="#7d7d7d" stroke-width="4.2"/><path d="M7.5 30 A15.5 15.5 0 0 0 35 23" fill="none" stroke="#7d7d7d" stroke-width="4.2"/><path d="M38 3 L38 15.5 L26 13 Z" fill="#7d7d7d"/><path d="M3 37 L3 24.5 L15 27 Z" fill="#7d7d7d"/></svg><div style="position:absolute;left:790px;top:1782px;width:119px;height:7px;background:#7b8a8a;border-radius:14px 14px 0 0"></div><div style="position:absolute;left:935px;top:1782px;width:1502px;height:7px;box-sizing:border-box;border:2px solid #d6d6d6;border-bottom:none;border-radius:5px 5px 0 0;background:#fff"></div><div style="position:absolute;left:2464px;top:418px;width:622px;height:1371px;background:#f7f8fa"></div><div style="position:absolute;left:2500px;top:453px;width:551px;height:1052px;box-sizing:border-box;border:3px solid #dcdde6;border-radius:11px;background:#fff"></div><div style="position:absolute;left:2525px;top:480.96px;font-size:37.5px;line-height:37.5px;font-weight:400;color:#6b7591;white-space:pre;">COMPANY/CONTACT</div><div style="position:absolute;left:2981px;top:478.5px;width:45px;height:44.0px;box-sizing:border-box;border:2.5px solid #dfe0e7;border-radius:4px;background:#fff"></div><svg style="position:absolute;left:2992px;top:494px;overflow:visible" width="23" height="15" viewBox="0 0 23 15"><path d="M11.5 0.5 L22.5 13.5 Q23 14.8 21.5 14.8 L1.5 14.8 Q0 14.8 0.5 13.5 Z" fill="#6b7591"/></svg><div style="position:absolute;left:2524.1px;top:553.31px;font-size:30px;line-height:30px;font-weight:700;color:#4a74cf;white-space:pre;">ABLE Manufacturing HQ</div><div style="position:absolute;left:2525px;top:598.21px;font-size:30px;line-height:30px;font-weight:400;color:#222838;white-space:pre;">Manager: Joe Security</div><svg style="position:absolute;left:2837px;top:594px;overflow:visible" width="30" height="30" viewBox="0 0 30 30"><g transform="scale(1.0)"><path d="M14.7 3.3 L3.3 3.3 Q1.5 3.3 1.5 5.1 L1.5 26.6 Q1.5 28.4 3.3 28.4 L24.7 28.4 Q26.5 28.4 26.5 26.6 L26.5 15.3" fill="none" stroke="#8e95a8" stroke-width="2.4" stroke-linecap="round"/><path d="M9.9 19.8 L9.9 16 L24.9 1.7 L28.2 5.1 L13.6 19.8 Z" fill="none" stroke="#8e95a8" stroke-width="2.4" stroke-linejoin="round"/></g></svg><div style="position:absolute;left:2525px;top:642.61px;font-size:30px;line-height:30px;font-weight:400;color:#4a74cf;white-space:pre;">Site Configuration</div><div style="position:absolute;left:2525px;top:710.40px;font-size:30px;line-height:30px;font-weight:400;color:#222838;white-space:pre;">163 Consaul Rd</div><div style="position:absolute;left:2525px;top:754.81px;font-size:30px;line-height:30px;font-weight:400;color:#222838;white-space:pre;">Albany, NY 12205</div><div style="position:absolute;left:2525px;top:800.31px;font-size:30px;line-height:30px;font-weight:400;color:#222838;white-space:pre;">United States</div><svg style="position:absolute;left:2717px;top:796px;overflow:visible" width="30" height="30" viewBox="0 0 30 30"><path d="M15 0 C9.5 0 6.5 4 6.5 8 C6.5 13 15 21 15 21 C15 21 23.5 13 23.5 8 C23.5 4 20.5 0 15 0 Z" fill="#8e95a8"/><circle cx="15" cy="8" r="3" fill="#fff"/><ellipse cx="15" cy="24" rx="13.3" ry="5" fill="none" stroke="#8e95a8" stroke-width="2.6"/><path d="M11 22 L15 26 L19 22" fill="#8e95a8"/></svg><div style="position:absolute;left:2525px;top:868.11px;font-size:30px;line-height:30px;font-weight:400;color:#222838;white-space:pre;">555-555-5561</div><div style="position:absolute;left:2525px;top:934.61px;font-size:30px;line-height:30px;white-space:pre;color:#222838"><span style="color:#4a74cf">All Open Tickets</span> <span style="margin-left:3.3px">(</span><span style="color:#4a74cf">18</span> <span style="margin-left:4.6px">+</span> <span style="margin-left:3.3px"><span style="color:#4a74cf">15</span></span>)</div><div style="position:absolute;left:2525px;top:979.61px;font-size:30px;line-height:30px;white-space:pre;color:#222838"><span style="color:#4a74cf">Last 30 Days</span> <span style="margin-left:3.3px">(</span><span style="color:#4a74cf">1</span> <span style="margin-left:4.6px">+</span> <span style="margin-left:3.3px">0</span>)</div><div style="position:absolute;left:2525px;top:1040px;width:501px;height:2px;background:#d8d9e3"></div><div style="position:absolute;left:2524.1px;top:1072.61px;font-size:30px;line-height:30px;font-weight:700;color:#4a74cf;white-space:pre;">John Jones</div><svg style="position:absolute;left:2703px;top:1069px;overflow:visible" width="30" height="30" viewBox="0 0 30 30"><g transform="scale(1.0)"><path d="M14.7 3.3 L3.3 3.3 Q1.5 3.3 1.5 5.1 L1.5 26.6 Q1.5 28.4 3.3 28.4 L24.7 28.4 Q26.5 28.4 26.5 26.6 L26.5 15.3" fill="none" stroke="#8e95a8" stroke-width="2.4" stroke-linecap="round"/><path d="M9.9 19.8 L9.9 16 L24.9 1.7 L28.2 5.1 L13.6 19.8 Z" fill="none" stroke="#8e95a8" stroke-width="2.4" stroke-linejoin="round"/></g></svg><div style="position:absolute;left:2525px;top:1117.61px;font-size:30px;line-height:30px;font-weight:400;color:#222838;white-space:pre;">Project Manager</div><div style="position:absolute;left:2525px;top:1185.11px;font-size:30px;line-height:30px;font-weight:400;color:#222838;white-space:pre;">551-555-5534, ext. 243</div><div style="position:absolute;left:2525px;top:1229.40px;font-size:30px;line-height:30px;font-weight:400;color:#222838;white-space:pre;">551-555-5543 (alternate)</div><div style="position:absolute;left:2525px;top:1274.31px;font-size:30px;line-height:30px;font-weight:400;color:#222838;white-space:pre;">551-555-3523 (mobile)</div><div style="position:absolute;left:2525px;top:1319.61px;font-size:30px;line-height:30px;font-weight:400;color:#4a74cf;white-space:pre;">QALab@autotask.com</div><div style="position:absolute;left:2525px;top:1387.40px;font-size:30px;line-height:30px;white-space:pre;color:#222838"><span style="color:#4a74cf">All Open Tickets</span> <span style="margin-left:3.3px">(</span><span style="color:#4a74cf">4</span> <span style="margin-left:4.6px">+</span> <span style="margin-left:3.3px">0</span>)</div><div style="position:absolute;left:2525px;top:1432.61px;font-size:30px;line-height:30px;white-space:pre;color:#222838"><span style="color:#4a74cf">Last 30 Days</span> <span style="margin-left:3.3px">(</span><span style="color:#4a74cf">1</span> <span style="margin-left:4.6px">+</span> <span style="margin-left:3.3px">0</span>)</div><div style="position:absolute;left:2500px;top:1542px;width:550px;height:239px;box-sizing:border-box;border:3px solid #dcdde6;border-radius:11px;background:#fff"></div><div style="position:absolute;left:2525px;top:1569.86px;font-size:37.5px;line-height:37.5px;font-weight:400;color:#6b7591;white-space:pre;">TIME SUMMARY</div><div style="position:absolute;left:2981px;top:1566.5px;width:45px;height:44.0px;box-sizing:border-box;border:2.5px solid #dfe0e7;border-radius:4px;background:#fff"></div><svg style="position:absolute;left:2992px;top:1581.5px;overflow:visible" width="23" height="15" viewBox="0 0 23 15"><path d="M11.5 0.5 L22.5 13.5 Q23 14.8 21.5 14.8 L1.5 14.8 Q0 14.8 0.5 13.5 Z" fill="#6b7591"/></svg><div style="position:absolute;left:2773px;top:1633px;width:2px;height:90px;background:#dcdde6"></div><div style="position:absolute;left:2142px;width:1000px;text-align:center;top:1640.20px;font-size:30px;line-height:30px;font-weight:400;color:#6b7591;white-space:pre;">Worked</div><div style="position:absolute;left:2142px;width:1000px;text-align:center;top:1684.61px;font-size:30px;line-height:30px;font-weight:700;color:#232a3a;white-space:pre;">0</div><div style="position:absolute;left:2406px;width:1000px;text-align:center;top:1640.20px;font-size:30px;line-height:30px;font-weight:400;color:#6b7591;white-space:pre;">Estimated</div><div style="position:absolute;left:2406px;width:1000px;text-align:center;top:1684.61px;font-size:30px;line-height:30px;font-weight:700;color:#232a3a;white-space:pre;">0</div>
</body></html>
